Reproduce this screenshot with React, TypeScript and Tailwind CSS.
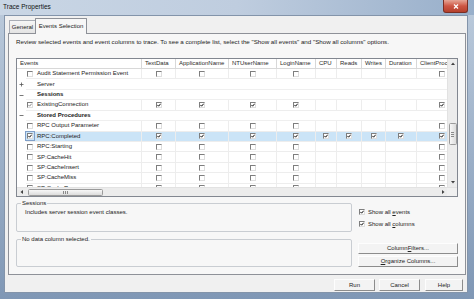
import React from 'react';

type Cell = boolean | null;

interface EventRow {
  kind: 'event';
  name: string;
  on: boolean;
  cells: Cell[];
  selected?: boolean;
  dim?: boolean;
}

interface CategoryRow {
  kind: 'category';
  name: string;
  open: boolean;
  bold: boolean;
}

type Row = EventRow | CategoryRow;

const columns = [
  { name: 'TextData', w: 'w-[34px]' },
  { name: 'ApplicationName', w: 'w-[53px]' },
  { name: 'NTUserName', w: 'w-[48px]' },
  { name: 'LoginName', w: 'w-[39px]' },
  { name: 'CPU', w: 'w-[21px]' },
  { name: 'Reads', w: 'w-[25px]' },
  { name: 'Writes', w: 'w-[24px]' },
  { name: 'Duration', w: 'w-[31px]' },
  { name: 'ClientProc', w: 'w-[51px]' },
];

const off: Cell[] = [false, false, false, false, null, null, null, null, false];

const rows: Row[] = [
  { kind: 'event', name: 'Audit Statement Permission Event', on: false, cells: off },
  { kind: 'category', name: 'Server', open: false, bold: false },
  { kind: 'category', name: 'Sessions', open: true, bold: true },
  {
    kind: 'event',
    name: 'ExistingConnection',
    on: true,
    dim: true,
    cells: [true, true, true, true, null, null, null, null, true],
  },
  { kind: 'category', name: 'Stored Procedures', open: true, bold: true },
  { kind: 'event', name: 'RPC Output Parameter', on: false, cells: off },
  {
    kind: 'event',
    name: 'RPC:Completed',
    on: true,
    selected: true,
    cells: [true, true, true, true, true, true, true, true, true],
  },
  { kind: 'event', name: 'RPC:Starting', on: false, cells: off },
  { kind: 'event', name: 'SP:CacheHit', on: false, cells: off },
  { kind: 'event', name: 'SP:CacheInsert', on: false, cells: off },
  { kind: 'event', name: 'SP:CacheMiss', on: false, cells: off },
  { kind: 'event', name: 'SP:CacheRemove', on: false, cells: off },
];

const Check: React.FC<{ checked?: boolean; dim?: boolean }> = ({ checked, dim }) => (
  <span className="inline-flex items-center justify-center w-[6px] h-[6px] shrink-0 bg-white border border-t-[#7e7e7e] border-l-[#7e7e7e] border-r-[#dedede] border-b-[#dedede]">
    {checked && (
      <svg viewBox="0 0 4 4" className="w-[4px] h-[4px]">
        <path d="M0.4 1.9 L1.6 3.2 L3.7 0.7" fill="none" stroke={dim ? '#8c8c8c' : '#111'} strokeWidth="1" />
      </svg>
    )}
  </span>
);

const Expander: React.FC<{ open: boolean }> = ({ open }) => (
  <svg viewBox="0 0 5 5" className="w-[5px] h-[5px]">
    <path d="M0.5 2.5 H4.5" stroke="#555" strokeWidth="0.8" />
    {!open && <path d="M2.5 0.5 V4.5" stroke="#555" strokeWidth="0.8" />}
  </svg>
);

const Arrow: React.FC<{ dir: 'up' | 'down' | 'left' | 'right' }> = ({ dir }) => {
  const d = {
    up: 'M0 3 L2 0.5 L4 3 Z',
    down: 'M0 1 L2 3.5 L4 1 Z',
    left: 'M3 0 L0.5 2 L3 4 Z',
    right: 'M1 0 L3.5 2 L1 4 Z',
  }[dir];
  return (
    <svg viewBox="0 0 4 4" className="w-[4px] h-[4px]">
      <path d={d} fill="#404040" />
    </svg>
  );
};

const Button: React.FC<{ className?: string; children: React.ReactNode }> = ({ className, children }) => (
  <div
    className={`flex items-center justify-center h-[11px] bg-[#f3f3f3] border border-t-[#fdfdfd] border-l-[#fdfdfd] border-r-[#8c8c8c] border-b-[#8c8c8c] text-[6px] text-[#222] whitespace-nowrap ${className ?? ''}`}
  >
    {children}
  </div>
);

const GridRow: React.FC<{ row: Row }> = ({ row }) => {
  if (row.kind === 'category') {
    return (
      <div className="flex h-[10.43px] shrink-0">
        <div className="w-[9px] shrink-0 flex items-center justify-center">
          <Expander open={row.open} />
        </div>
        <div className="flex-1 flex items-center border-b border-[#efefef]">
          <span className={`ml-[11px] text-[6px] whitespace-nowrap ${row.bold ? 'font-bold' : ''}`}>{row.name}</span>
        </div>
      </div>
    );
  }
  return (
    <div className="flex h-[10.43px] shrink-0">
      <div className="w-[9px] shrink-0" />
      <div className={`flex flex-1 ${row.selected ? 'bg-[#cbe4f7]' : ''}`}>
        <div className="w-[116px] shrink-0 flex items-center border-r border-b border-[#ededed]">
          {row.selected ? (
            <span className="ml-[-1px] p-[1px] border border-[#7f9fc8] flex">
              <Check checked={row.on} />
            </span>
          ) : (
            <span className="ml-[1px] flex">
              <Check checked={row.on} dim={row.dim} />
            </span>
          )}
          <span className={`${row.selected ? 'ml-[2px]' : 'ml-[4px]'} text-[6px] whitespace-nowrap`}>{row.name}</span>
        </div>
        {columns.map((c, i) => (
          <div
            key={c.name}
            className={`${c.w} shrink-0 flex items-center justify-center border-r border-b border-[#ededed]`}
          >
            {row.cells[i] !== null && <Check checked={row.cells[i] === true} />}
          </div>
        ))}
      </div>
    </div>
  );
};

const EventGrid: React.FC = () => (
  <div className="mt-[12px] h-[139px] shrink-0 border border-[#828790] bg-white flex flex-col">
    <div className="flex flex-1 min-h-0">
      <div className="flex-1 min-w-0 flex flex-col overflow-hidden">
        <div className="flex h-[10px] shrink-0 border-b border-[#d8d8d8] text-[6px] text-[#2b2b2b]">
          <div className="w-[125px] shrink-0 flex items-center pl-[3px] border-r border-[#d8d8d8]">Events</div>
          {columns.map((c) => (
            <div
              key={c.name}
              className={`${c.w} shrink-0 flex items-center pl-[3px] border-r border-[#d8d8d8] whitespace-nowrap overflow-hidden`}
            >
              {c.name}
            </div>
          ))}
        </div>
        <div className="flex-1 min-h-0 flex flex-col overflow-hidden">
          {rows.map((r) => (
            <GridRow key={r.name} row={r} />
          ))}
        </div>
      </div>
      <div className="w-[10px] shrink-0 flex flex-col bg-[#ececec] border-l border-[#e2e2e2]">
        <div className="h-[10px] flex items-center justify-center">
          <Arrow dir="up" />
        </div>
        <div className="flex-1 flex flex-col items-center">
          <div className="mt-[54px] w-[8px] h-[22px] rounded-[1.5px] border border-[#9b9b9b] bg-linear-to-r from-[#f7f7f7] to-[#dcdcdc] flex flex-col items-center justify-center gap-[1px]">
            <span className="w-[3px] h-px bg-[#8a8a8a]" />
            <span className="w-[3px] h-px bg-[#8a8a8a]" />
            <span className="w-[3px] h-px bg-[#8a8a8a]" />
          </div>
        </div>
        <div className="h-[10px] flex items-center justify-center">
          <Arrow dir="down" />
        </div>
      </div>
    </div>
    <div className="flex h-[9px] shrink-0 bg-[#ececec] border-t border-[#e2e2e2]">
      <div className="w-[9px] flex items-center justify-center">
        <Arrow dir="left" />
      </div>
      <div className="flex-1 flex items-center">
        <div className="ml-[2px] w-[75px] h-[7px] rounded-[1.5px] border border-[#9b9b9b] bg-linear-to-b from-[#f7f7f7] to-[#dcdcdc] flex items-center justify-center gap-[1px]">
          <span className="w-px h-[3px] bg-[#8a8a8a]" />
          <span className="w-px h-[3px] bg-[#8a8a8a]" />
          <span className="w-px h-[3px] bg-[#8a8a8a]" />
        </div>
      </div>
      <div className="w-[9px] flex items-center justify-center">
        <Arrow dir="right" />
      </div>
      <div className="w-[10px] bg-[#f0f0f0]" />
    </div>
  </div>
);

const App: React.FC = () => {
  return (
    <div className="w-[474px] h-[299px] overflow-hidden flex flex-col bg-linear-to-b from-[#bccbdc] to-[#7f97b5] font-['Liberation_Sans',Arial,sans-serif] text-[#1b1b1b]">
      {/* title bar */}
      <div className="h-[15px] shrink-0 flex items-start bg-linear-to-r from-[#c9d6e5] via-[#bfcddf] to-[#98afca]">
        <span className="ml-[3px] mt-[3px] text-[6.5px] leading-[8px] text-[#111]">Trace Properties</span>
        <div className="ml-auto mr-[6px] w-[25px] h-[13px] rounded-b-[3px] border border-t-0 border-[#7a2e24] bg-linear-to-b from-[#e5a596] via-[#cd5544] to-[#b4402c] flex items-center justify-center">
          <svg viewBox="0 0 6 5" className="w-[6px] h-[5px]">
            <path d="M1 0.5 L5 4.5 M5 0.5 L1 4.5" stroke="#fff" strokeWidth="1.2" />
          </svg>
        </div>
      </div>

      {/* client area */}
      <div className="flex-1 ml-[4px] mr-[6px] mb-[6px] bg-[#f0f0f0] border border-[#8394aa] flex flex-col pl-[3px] pr-[1px] pt-[2px]">
        {/* tabs */}
        <div className="h-[15px] shrink-0 flex items-end text-[6px] text-[#222]">
          <div className="ml-[1px] w-[27px] h-[13px] flex items-center justify-center border border-b-0 border-[#a9adb5] bg-linear-to-b from-[#f6f6f6] to-[#e4e4e4] rounded-t-[1px]">
            General
          </div>
          <div className="relative z-10 -mb-px ml-[-1px] w-[52px] h-[16px] flex items-center justify-center border border-b-0 border-[#8e9198] bg-[#f7f7f7] rounded-t-[1px] whitespace-nowrap">
            Events Selection
          </div>
        </div>

        {/* tab panel */}
        <div className="h-[242px] shrink-0 border border-[#8e9198] bg-[#f7f7f7] flex flex-col px-[7px]">
          <p className="mt-[4px] h-[8px] leading-[8px] text-[6.2px] text-[#222] whitespace-nowrap">
            Review selected events and event columns to trace. To see a complete list, select the "Show all events" and
            "Show all columns" options.
          </p>

          <EventGrid />

          <div className="mt-[3px] flex">
            <div className="w-[336px] shrink-0 flex flex-col">
              <fieldset className="h-[32px] border border-[#c9cdd2] rounded-[2px] pl-[8px]">
                <legend className="ml-[-4px] px-[1px] text-[6px] leading-[7px] text-[#222]">Sessions</legend>
                <p className="mt-[1.5px] text-[6px] leading-[7px] text-[#222]">Includes server session event classes.</p>
              </fieldset>
              <fieldset className="mt-[4px] h-[31px] border border-[#c9cdd2] rounded-[2px] pl-[8px]">
                <legend className="ml-[-4px] px-[1px] text-[6px] leading-[7px] text-[#222]">No data column selected.</legend>
              </fieldset>
            </div>
            <div className="ml-auto w-[100px] shrink-0 flex flex-col text-[6px] text-[#222]">
              <div className="mt-[8px] h-[8px] flex items-center">
                <span className="ml-[1px] flex">
                  <Check checked />
                </span>
                <span className="ml-[3px]">
                  Show all <u>e</u>vents
                </span>
              </div>
              <div className="mt-[4px] h-[8px] flex items-center">
                <span className="ml-[1px] flex">
                  <Check checked />
                </span>
                <span className="ml-[3px]">
                  Show all <u>c</u>olumns
                </span>
              </div>
              <Button className="mt-[15px]">
                Column <u>F</u>ilters...
              </Button>
              <Button className="mt-[2px]">
                <u>O</u>rganize Columns...
              </Button>
            </div>
          </div>
        </div>

        {/* dialog buttons */}
        <div className="mt-[4px] flex justify-end pr-[3px]">
          <Button className="w-[41px] h-[12px]">Run</Button>
          <Button className="ml-[4px] w-[41px] h-[12px]">Cancel</Button>
          <Button className="ml-[5px] w-[38px] h-[12px]">Help</Button>
        </div>
      </div>
    </div>
  );
};

export default App;
